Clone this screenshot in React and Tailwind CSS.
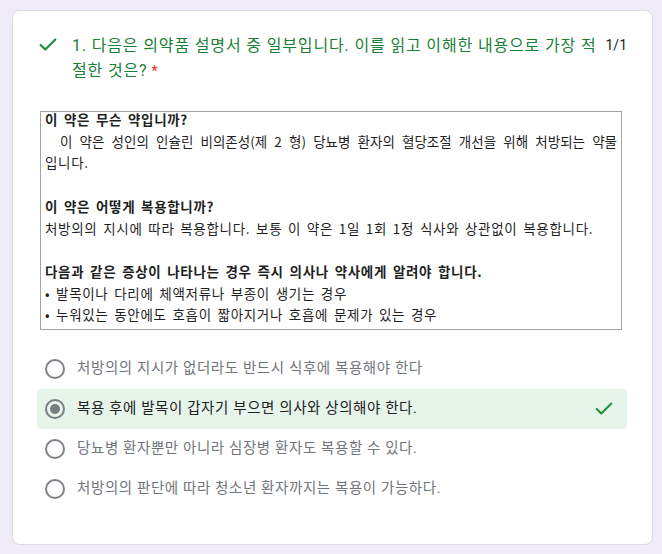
import { Check } from 'lucide-react';

const OPTIONS = [
    { text: '처방의의 지시가 없더라도 반드시 식후에 복용해야 한다', selected: false },
    { text: '복용 후에 발목이 갑자기 부으면 의사와 상의해야 한다.', selected: true },
    { text: '당뇨병 환자뿐만 아니라 심장병 환자도 복용할 수 있다.', selected: false },
    { text: '처방의의 판단에 따라 청소년 환자까지는 복용이 가능하다.', selected: false },
];

const Radio = ({ checked }) => (
    <span className="w-5 h-5 rounded-full border-2 border-[#5f6368] flex items-center justify-center shrink-0 opacity-80">
        {checked && <span className="w-[10px] h-[10px] rounded-full bg-[#5f6368]" />}
    </span>
);

const LeafletImage = () => (
    <div className="ml-[27px] w-[582px] h-[219px] border-[1.5px] border-[#a3a3a3] pl-[4px] pr-[4px] text-[13.5px] leading-[21.7px] tracking-[0.7px] text-[#1f1f1f] [word-spacing:2px]" style={{ fontFamily: '"Noto Sans CJK KR", "Noto Sans", sans-serif' }}>
        <div className="-mt-[3px]">
            <div className="font-bold">이 약은 무슨 약입니까?</div>
            <div className="pl-[15px] text-justify [text-align-last:justify] tracking-normal [word-spacing:0px]">이 약은 성인의 인슐린 비의존성(제 2 형) 당뇨병 환자의 혈당조절 개선을 위해 처방되는 약물</div>
            <div>입니다.</div>
            <div>&nbsp;</div>
            <div className="font-bold">이 약은 어떻게 복용합니까?</div>
            <div>처방의의 지시에 따라 복용합니다. 보통 이 약은 1일 1회 1정 식사와 상관없이 복용합니다.</div>
            <div>&nbsp;</div>
            <div className="font-bold">다음과 같은 증상이 나타나는 경우 즉시 의사나 약사에게 알려야 합니다.</div>
            <div>• 발목이나 다리에 체액저류나 부종이 생기는 경우</div>
            <div>• 누워있는 동안에도 호흡이 짧아지거나 호흡에 문제가 있는 경우</div>
        </div>
    </div>
);

const App = () => {
    return (
        <div className="min-h-screen bg-[#f0ebf8] pt-[10px] pl-[12px]" style={{ fontFamily: 'Roboto, "Noto Sans CJK KR", sans-serif' }}>
            <div className="w-[641px] h-[535px] bg-white rounded-lg border border-[#dadce0] pt-[22px]">
                <div className="flex items-start pl-[24px] pr-[25px]">
                    <Check size={22} strokeWidth={2.4} className="text-[#1e8e3e] mt-[1px] shrink-0" />
                    <h2 className="ml-[13px] flex-1 text-[16px] leading-[25px] text-[#188038] tracking-[0.85px] break-all">
                        1. 다음은 의약품 설명서 중 일부입니다. 이를 읽고 이해한 내용으로 가장 적절한 것은?
                        <span className="text-[#d93025] text-[14px] ml-1">*</span>
                    </h2>
                    <span className="ml-2 text-[14px] leading-[25px] text-[#202124]">1/1</span>
                </div>

                <div className="mt-[27px]">
                    <LeafletImage />
                </div>

                <div className="mt-[19px] flex flex-col">
                    {OPTIONS.map((opt) => (
                        <div
                            key={opt.text}
                            className={`ml-[24px] w-[590px] h-[40px] flex items-center pl-[8px] pr-[12px] rounded ${opt.selected ? 'bg-[#e6f4ea]' : ''}`}
                        >
                            <Radio checked={opt.selected} />
                            <span className={`ml-[12px] flex-1 text-[14.5px] tracking-[0.6px] ${opt.selected ? 'text-[#202124]' : 'text-[#70757a]'}`}>{opt.text}</span>
                            {opt.selected && <Check size={22} strokeWidth={2.2} className="text-[#1e8e3e]" />}
                        </div>
                    ))}
                </div>
            </div>
        </div>
    );
};

export default App;
